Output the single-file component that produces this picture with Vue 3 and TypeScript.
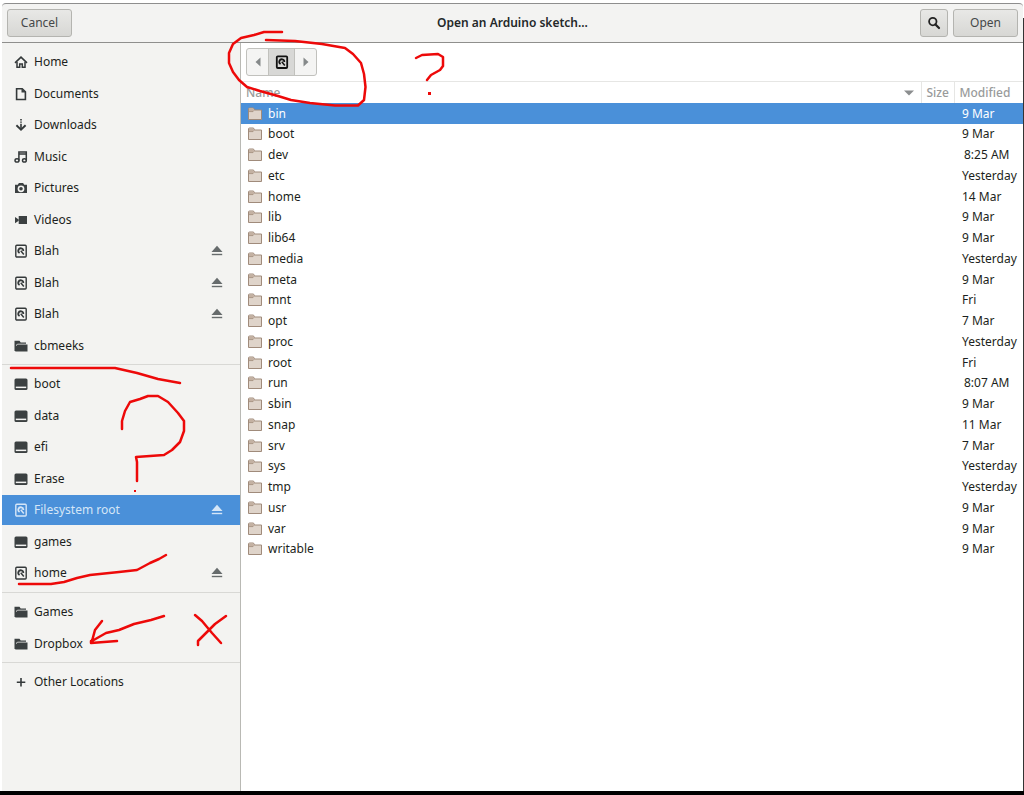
<script setup lang="ts">
type Icon = 'home' | 'doc' | 'down' | 'music' | 'camera' | 'video' | 'disk' | 'folder' | 'drive' | 'plus'

interface Place {
  name: string
  icon: Icon
  eject?: boolean
  selected?: boolean
}

const groups: Place[][] = [
  [
    { name: 'Home', icon: 'home' },
    { name: 'Documents', icon: 'doc' },
    { name: 'Downloads', icon: 'down' },
    { name: 'Music', icon: 'music' },
    { name: 'Pictures', icon: 'camera' },
    { name: 'Videos', icon: 'video' },
    { name: 'Blah', icon: 'disk', eject: true },
    { name: 'Blah', icon: 'disk', eject: true },
    { name: 'Blah', icon: 'disk', eject: true },
    { name: 'cbmeeks', icon: 'folder' },
  ],
  [
    { name: 'boot', icon: 'drive' },
    { name: 'data', icon: 'drive' },
    { name: 'efi', icon: 'drive' },
    { name: 'Erase', icon: 'drive' },
    { name: 'Filesystem root', icon: 'disk', eject: true, selected: true },
    { name: 'games', icon: 'drive' },
    { name: 'home', icon: 'disk', eject: true },
  ],
  [
    { name: 'Games', icon: 'folder' },
    { name: 'Dropbox', icon: 'folder' },
  ],
  [{ name: 'Other Locations', icon: 'plus' }],
]

const files: [string, string][] = [
  ['bin', '9 Mar'],
  ['boot', '9 Mar'],
  ['dev', '8:25 AM'],
  ['etc', 'Yesterday'],
  ['home', '14 Mar'],
  ['lib', '9 Mar'],
  ['lib64', '9 Mar'],
  ['media', 'Yesterday'],
  ['meta', '9 Mar'],
  ['mnt', 'Fri'],
  ['opt', '7 Mar'],
  ['proc', 'Yesterday'],
  ['root', 'Fri'],
  ['run', '8:07 AM'],
  ['sbin', '9 Mar'],
  ['snap', '11 Mar'],
  ['srv', '7 Mar'],
  ['sys', 'Yesterday'],
  ['tmp', 'Yesterday'],
  ['usr', '9 Mar'],
  ['var', '9 Mar'],
  ['writable', '9 Mar'],
]
</script>

<template>
  <div class="window">
    <header class="titlebar">
      <button class="btn cancel" type="button">Cancel</button>
      <h1>Open an Arduino sketch...</h1>
      <div class="actions">
        <button class="btn search" type="button" aria-label="Search">
          <svg width="14" height="14" viewBox="0 0 14 14">
            <circle cx="5.8" cy="5.6" r="3.7" fill="none" stroke="#222" stroke-width="1.8" />
            <path d="M8.5 8.4 12 12" stroke="#222" stroke-width="2.2" stroke-linecap="round" />
          </svg>
        </button>
        <button class="btn open" type="button">Open</button>
      </div>
    </header>

    <div class="body">
      <nav class="sidebar" aria-label="Places">
        <ul v-for="(group, g) in groups" :key="g" class="group">
          <li v-for="(p, i) in group" :key="i" class="place" :class="{ selected: p.selected }">
            <button type="button" class="go">
              <svg class="icon" width="14" height="14" viewBox="0 0 14 14">
                <template v-if="p.icon === 'home'">
                  <path d="M1 7.8 7 2.2 13 7.800" class="line" stroke-width="1.6" />
                  <path d="M3 7v5.200h2.700V9h2.600v3.200H11V7" class="line" stroke-width="1.5" />
                </template>
                <template v-else-if="p.icon === 'doc'">
                  <path d="M2.600 1.700h5.600l3.200 3.200v7.600H2.600z" class="line" stroke-width="1.600" />
                  <path d="M7.500 1.500v4h4z" class="solid" />
                </template>
                <template v-else-if="p.icon === 'down'">
                  <path d="M7 1v1.400M7 3.400v1.400M7 5.800v5" class="line" stroke-width="1.600" />
                  <path d="M2.400 7.300 7 11.700l4.600-4.400" class="line" stroke-width="1.900" />
                </template>
                <template v-else-if="p.icon === 'music'">
                  <path d="M4.900 10.500V2h7.400v8.200M4.900 4.100h7.400" class="line" stroke-width="1.500" />
                  <ellipse cx="3" cy="10.400" rx="2" ry="1.700" class="line" stroke-width="1.500" />
                  <ellipse cx="10.400" cy="10.400" rx="1.900" ry="1.700" class="line" stroke-width="1.500" />
                </template>
                <template v-else-if="p.icon === 'camera'">
                  <path
                    fill-rule="evenodd"
                    class="solid"
                    d="M1 3.700h2.800L4.900 2h4.200l1.100 1.700H13V12H1zM7 4.400a3.400 3.400 0 1 0 0 6.800 3.400 3.400 0 0 0 0-6.800z"
                  />
                  <circle cx="7" cy="7.800" r="1.800" class="solid" />
                </template>
                <template v-else-if="p.icon === 'video'">
                  <path d="M4.700 3H13v8H4.700z" class="solid" />
                  <path d="M1 4v6.200L4.700 7.800V6.400z" class="solid" />
                </template>
                <template v-else-if="p.icon === 'disk'">
                  <rect x="1.800" y="1.300" width="10.400" height="11.700" rx="1" class="line" stroke-width="1.400" />
                  <path d="M5.600 9A2.500 2.500 0 1 1 9.300 7" class="line" stroke-width="1.800" />
                  <path d="M6.800 6.800 9.800 10.500" class="line" stroke-width="1.500" />
                </template>
                <template v-else-if="p.icon === 'folder'">
                  <path d="M.5 12V1.800h5l1.200 1.700H12v1.200H3.600L2 6v6z" class="solid" />
                  <path d="M3.400 5.500h10.100v7H1.300V8z" class="solid" />
                </template>
                <template v-else-if="p.icon === 'drive'">
                  <rect x=".5" y="1.500" width="13" height="11.500" rx="1.500" class="solid" />
                  <path d="M1.800 9.600h10.400v1.500H1.800z" class="hole" />
                </template>
                <path v-else d="M7 3v8.500M2.800 7.200h8.500" class="line" stroke-width="1.600" />
              </svg>
              <span>{{ p.name }}</span>
            </button>
            <button v-if="p.eject" type="button" class="eject" :aria-label="`Eject ${p.name}`">
              <svg width="12" height="12" viewBox="0 0 12 12">
                <path d="M6 .8 11.500 7H.5z" fill="currentColor" />
                <path d="M.8 9.500h10.400" stroke="currentColor" stroke-width="1.400" />
              </svg>
            </button>
          </li>
        </ul>
      </nav>

      <main class="content">
        <div class="pathbar">
          <div class="crumbs">
            <button type="button" class="arrow" aria-label="Back">
              <svg width="6" height="10" viewBox="0 0 6 10"><path d="M5.500.5v9L.5 5z" /></svg>
            </button>
            <button type="button" class="current" aria-label="Filesystem root">
              <svg width="14" height="14" viewBox="0 0 14 14">
                <rect x="1.800" y="1.300" width="10.400" height="11.700" rx="1" class="line" stroke-width="1.800" />
                <path d="M5.600 9A2.500 2.500 0 1 1 9.300 7" class="line" stroke-width="1.800" />
                <path d="M6.800 6.800 9.800 10.500" class="line" stroke-width="1.500" />
              </svg>
            </button>
            <button type="button" class="arrow" aria-label="Forward">
              <svg width="6" height="10" viewBox="0 0 6 10"><path d="M.5.5v9l5-4.500z" /></svg>
            </button>
          </div>
        </div>

        <table class="files">
          <thead>
            <tr>
              <th scope="col">
                <div class="sort">
                  <span>Name</span>
                  <svg width="10" height="6" viewBox="0 0 10 6"><path d="M0 .5h10L5 5.500z" fill="#8b8e8f" /></svg>
                </div>
              </th>
              <th scope="col" class="size">Size</th>
              <th scope="col" class="modified">Modified</th>
            </tr>
          </thead>
          <tbody>
            <tr v-for="(f, i) in files" :key="f[0]" :class="{ selected: i === 0 }">
              <td>
                <div class="file">
                  <svg width="14" height="14" viewBox="0 0 14 14">
                    <path d="M.5 12.500V2q0-1 1-1h4l1 2h7v9.500z" fill="#dfd4ca" stroke="#a08b7b" />
                    <path d="M1 2q0-.5.500-.5h3.700l.8 1.500-1 1.500H1z" fill="#c4b1a2" />
                    <path d="M1 4.600h4l1.200-1.300" fill="none" stroke="#a08b7b" stroke-width=".8" />
                  </svg>
                  <span>{{ f[0] }}</span>
                </div>
              </td>
              <td></td>
              <td class="date" :class="{ time: f[1].includes(':') }">{{ f[1] }}</td>
            </tr>
          </tbody>
        </table>
      </main>
    </div>

    <svg class="ink" width="1024" height="795" viewBox="0 0 1024 795" aria-hidden="true">
      <path d="M282 32H264L254 35 241 38 233 44 229 53V63L233 72 239 80 247 87 260 91 278 96 291 100 310 103 335 105.500H358L364 100 365.500 87 364 74 361 63 353 54 345 48 322 44 295 41 266 40" />
      <path d="M416 58 422 55 438 54 443 57V66L440 70 431 75 427 80" />
      <path d="M11 368H115L137 373 158 379 180 383" />
      <path d="M122 429V421L125 411 130 402 140 399 148 396H158L168 402 178 413 184 421V431L180 442 172 450 164 455 136 457 137 462V481" />
      <path d="M19 584H51L64 582 77 578 90 575 119 572 137 570 150 563 159 559 166 555" />
      <path d="M164 616 151 620 134 624 119 630 106 633 92 641 95 630 102 621M91 641V643L117 641" />
      <path d="M195 615 202 621 212 633 221 643M226 616 215 624 202 637 198 641V645" />
      <path d="M428 92h3v3h-3zM134 490h2v2h-2z" class="dot" />
    </svg>
  </div>
</template>

<style>
body {
  margin: 0;
}
</style>

<style scoped>
.window {
  position: relative;
  box-sizing: border-box;
  display: flex;
  flex-direction: column;
  min-height: 100vh;
  padding: 3px 1px 4px 2px;
  background: linear-gradient(#fff, #fff) top / 100% 18px no-repeat,
    linear-gradient(#000, #000) bottom / 100% 4px no-repeat,
    linear-gradient(#333, #333) right / 1px 100% no-repeat,
    #fff;
  font-family: 'Noto Sans', 'Open Sans', sans-serif;
  font-size: 12px;
  line-height: 18px;
  color: #1c1f20;
}
button {
  font: inherit;
  color: inherit;
  margin: 0;
  padding: 0;
  border: 0;
  background: none;
}
.titlebar {
  box-sizing: border-box;
  height: 40px;
  display: grid;
  grid-template-columns: 1fr auto 1fr;
  align-items: center;
  padding: 0 5px;
  background: #f3f3f2;
  border-top: 1px solid #8e8e8e;
  border-bottom: 1px solid #8f8f8d;
  border-radius: 4px 4px 0 0;
}
h1 {
  margin: 0;
  font-size: 12px;
  font-weight: 600;
  color: #242829;
}
.btn {
  box-sizing: border-box;
  height: 28px;
  border: 1px solid #b4b4b0;
  border-radius: 3px;
  background: linear-gradient(#e8e8e6, #d7d7d4);
  color: #454849;
}
.cancel {
  width: 65px;
}
.actions {
  display: flex;
  justify-content: flex-end;
  gap: 5px;
}
.search {
  width: 28px;
  display: flex;
  align-items: center;
  justify-content: center;
}
.open {
  width: 65px;
}
.body {
  flex: 1;
  display: flex;
}
.sidebar {
  box-sizing: border-box;
  flex: none;
  width: 239px;
  background: #f3f3f1;
  border-right: 1px solid #b9b9b4;
}
.group {
  margin: 0;
  padding: 4px 0 2px;
  list-style: none;
}
.group + .group {
  border-top: 1px solid #d8d8d5;
}
.place {
  display: flex;
  align-items: center;
  height: 30px;
  margin-bottom: 1px;
}
.place:nth-child(odd) {
  margin-bottom: 2px;
}
.go {
  flex: 1;
  height: 30px;
  display: flex;
  align-items: center;
  gap: 6px;
  padding-left: 12px;
  text-align: left;
}
.eject {
  display: flex;
  margin-right: 17px;
  color: #666b6c;
}
.line {
  fill: none;
  stroke: #34393a;
}
.solid {
  fill: #3b4041;
}
.hole {
  fill: #f3f3f1;
}
.selected {
  background: #4a90d9;
  color: #fff;
}
.place.selected,
.place.selected .eject {
  color: #d5e6f7;
}
.selected .line {
  stroke: #d5e6f7;
}
.content {
  flex: 1;
  min-width: 0;
  background: #fff;
}
.pathbar {
  padding: 5px;
  border-bottom: 1px solid #e6e6e4;
}
.crumbs {
  display: inline-flex;
  vertical-align: top;
  border: 1px solid #c1c1bd;
  border-radius: 3px;
  background: #f4f4f3;
}
.crumbs button {
  display: flex;
  align-items: center;
  justify-content: center;
  height: 26px;
}
.arrow {
  width: 21px;
}
.arrow path {
  fill: #85898a;
}
.crumbs .current {
  width: 27px;
  border: solid #c1c1bd;
  border-width: 0 1px;
  background: #d8d8d6;
}
.current .line {
  stroke: #111;
}
.files {
  width: 100%;
  border-collapse: collapse;
  table-layout: fixed;
}
th {
  box-sizing: border-box;
  height: 21px;
  padding: 0 5px;
  line-height: 20px;
  text-align: left;
  font-weight: 500;
  color: #999b9b;
}
th + th {
  border-left: 1px solid #e6e6e4;
}
.size {
  width: 33px;
}
.modified {
  width: 69px;
}
.sort {
  display: flex;
  justify-content: space-between;
  align-items: center;
}
.sort svg {
  margin-right: 2px;
}
td {
  height: 21px;
  padding: 0;
  line-height: 20px;
}
tbody tr:nth-child(4n + 2) td {
  height: 20px;
}
.file {
  display: flex;
  align-items: center;
  gap: 6px;
  padding-left: 7px;
}
.date {
  padding-left: 8px;
  white-space: nowrap;
}
.time {
  padding-left: 10px;
}
.ink {
  position: absolute;
  top: 0;
  left: 0;
  pointer-events: none;
  fill: none;
  stroke: #ed0909;
  stroke-width: 2.5;
  stroke-linecap: round;
  stroke-linejoin: round;
}
.dot {
  fill: #ed0909;
  stroke: none;
}
</style>
